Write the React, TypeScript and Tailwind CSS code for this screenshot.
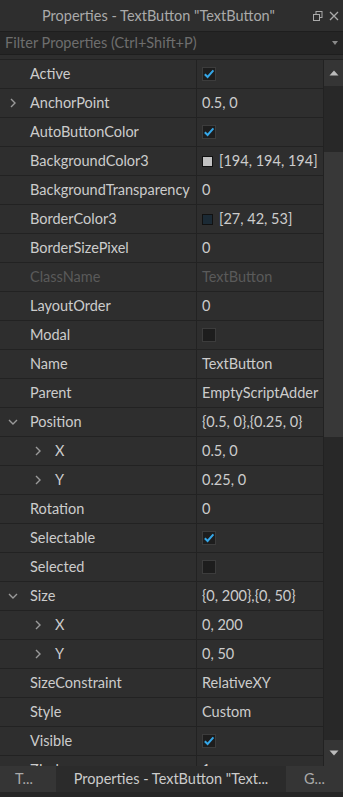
import React from "react";

type Kind = "check" | "uncheck" | "text" | "color" | "disabled";

type Row = {
  name: string;
  value?: string;
  kind?: Kind;
  chevron?: "right" | "down";
  child?: boolean;
  swatch?: string;
};

const rows: Row[] = [
  { name: "Active", kind: "check" },
  { name: "AnchorPoint", value: "0.5, 0", chevron: "right" },
  { name: "AutoButtonColor", kind: "check" },
  { name: "BackgroundColor3", value: "[194, 194, 194]", kind: "color", swatch: "#c2c2c2" },
  { name: "BackgroundTransparency", value: "0" },
  { name: "BorderColor3", value: "[27, 42, 53]", kind: "color", swatch: "#1b2a35" },
  { name: "BorderSizePixel", value: "0" },
  { name: "ClassName", value: "TextButton", kind: "disabled" },
  { name: "LayoutOrder", value: "0" },
  { name: "Modal", kind: "uncheck" },
  { name: "Name", value: "TextButton" },
  { name: "Parent", value: "EmptyScriptAdder" },
  { name: "Position", value: "{0.5, 0},{0.25, 0}", chevron: "down" },
  { name: "X", value: "0.5, 0", chevron: "right", child: true },
  { name: "Y", value: "0.25, 0", chevron: "right", child: true },
  { name: "Rotation", value: "0" },
  { name: "Selectable", kind: "check" },
  { name: "Selected", kind: "uncheck" },
  { name: "Size", value: "{0, 200},{0, 50}", chevron: "down" },
  { name: "X", value: "0, 200", chevron: "right", child: true },
  { name: "Y", value: "0, 50", chevron: "right", child: true },
  { name: "SizeConstraint", value: "RelativeXY" },
  { name: "Style", value: "Custom" },
  { name: "Visible", kind: "check" },
  { name: "ZIndex", value: "1" },
];

const Chevron = ({ dir }: { dir: "right" | "down" }) => (
  <svg width="12" height="12" viewBox="0 0 12 12" className="shrink-0">
    {dir === "right" ? (
      <path d="M4 2 L8 6 L4 10" fill="none" stroke="#9a9a9a" strokeWidth="1.4" />
    ) : (
      <path d="M2 4 L6 8 L10 4" fill="none" stroke="#9a9a9a" strokeWidth="1.4" />
    )}
  </svg>
);

const Check = ({ on }: { on: boolean }) => (
  <div className="w-[14px] h-[14px] bg-[#1d1d1d] border border-[#3c3c3c] flex items-center justify-center">
    {on && (
      <svg width="12" height="12" viewBox="0 0 12 12">
        <path d="M1.8 6.2 L4.6 9 L10.4 2.4" fill="none" stroke="#35a7e8" strokeWidth="2" />
      </svg>
    )}
  </div>
);

const PropRow = ({ row }: { row: Row }) => {
  const dim = row.kind === "disabled";
  return (
    <div className="flex h-[29px] border-b border-[#222222] shrink-0">
      <div className="w-[197px] shrink-0 flex items-center border-r border-[#222222]">
        <div className={row.child ? "w-[55px] flex items-center pl-[32px]" : "w-[30px] flex items-center pl-[7px]"}>
          {row.chevron && <Chevron dir={row.chevron} />}
        </div>
        <span className={dim ? "text-[#5a5a5a]" : "text-[#cccccc]"}>{row.name}</span>
      </div>
      <div className="flex-1 flex items-center pl-[5px] min-w-0">
        {row.kind === "check" && <Check on />}
        {row.kind === "uncheck" && <Check on={false} />}
        {row.kind === "color" && (
          <div className="flex items-center gap-[6px]">
            <div
              className="w-[11px] h-[11px] border border-[#111111]"
              style={{ background: row.swatch }}
            />
            <span className="text-[#cccccc]">{row.value}</span>
          </div>
        )}
        {(row.kind === undefined || row.kind === "text") && (
          <span className="text-[#cccccc] whitespace-nowrap">{row.value}</span>
        )}
        {dim && <span className="text-[#5a5a5a]">{row.value}</span>}
      </div>
    </div>
  );
};

export default function App() {
  return (
    <div
      className="w-[343px] h-[797px] flex flex-col bg-[#2e2e2e] overflow-hidden text-[14.5px]"
      style={{ fontFamily: "Lato, 'Noto Sans', sans-serif" }}
    >
      {/* Title bar */}
      <div className="h-[31px] shrink-0 flex items-center bg-[#2e2e2e]">
        <div className="flex-1 text-center text-[#aaaaaa] pl-[10px] pr-[6px]">
          Properties - TextButton "TextButton"
        </div>
        <div className="flex items-center gap-[6px] pr-[4px]">
          <svg width="10" height="10" viewBox="0 0 10 10">
            <rect x="3" y="0.5" width="6" height="6" fill="none" stroke="#aaaaaa" strokeWidth="1" />
            <rect x="0.5" y="3.5" width="6" height="6" fill="#2e2e2e" stroke="#aaaaaa" strokeWidth="1" />
          </svg>
          <svg width="10" height="10" viewBox="0 0 10 10">
            <path d="M1 1 L9 9 M9 1 L1 9" stroke="#aaaaaa" strokeWidth="1.3" />
          </svg>
        </div>
      </div>

      {/* Filter */}
      <div className="h-[24px] shrink-0 flex items-center bg-[#252525] border-y border-[#1e1e1e]">
        <span className="flex-1 pl-[5px] text-[#6e6e6e]">Filter Properties (Ctrl+Shift+P)</span>
        <svg width="8" height="6" viewBox="0 0 8 6" className="mr-[4px]">
          <path d="M1 1 L7 1 L4 5 Z" fill="#8a8a8a" />
        </svg>
      </div>
      <div className="h-[5px] shrink-0 bg-[#2e2e2e] border-b border-[#222222]" />

      {/* Property list + scrollbar */}
      <div className="flex-1 flex min-h-0">
        <div className="flex-1 flex flex-col overflow-hidden">
          {rows.map((r, i) => (
            <PropRow key={i} row={r} />
          ))}
        </div>
        <div className="w-[20px] shrink-0 flex flex-col bg-[#282828] border-l border-[#222222]">
          <div className="h-[26px] shrink-0 flex items-center justify-center bg-[#353535]">
            <svg width="10" height="6" viewBox="0 0 10 6">
              <path d="M0.5 5.5 L5 0.5 L9.5 5.5 Z" fill="#bcbcbc" />
            </svg>
          </div>
          <div className="h-[66px] shrink-0" />
          <div className="h-[285px] shrink-0 bg-[#383838]" />
          <div className="flex-1" />
          <div className="h-[26px] shrink-0 flex items-center justify-center bg-[#353535]">
            <svg width="10" height="6" viewBox="0 0 10 6">
              <path d="M0.5 0.5 L9.5 0.5 L5 5.5 Z" fill="#bcbcbc" />
            </svg>
          </div>
        </div>
      </div>

      {/* Bottom tabs */}
      <div className="h-[26px] shrink-0 flex items-center bg-[#353535] text-[#aaaaaa]">
        <div className="w-[56px] pl-[15px]">T...</div>
        <div className="w-[230px] h-full flex items-center justify-center bg-[#2b2b2b] text-[#cccccc]">
          Properties - TextButton "Text...
        </div>
        <div className="flex-1 pl-[18px]">G...</div>
      </div>
      <div className="h-[5px] shrink-0 bg-[#262626]" />
    </div>
  );
}
